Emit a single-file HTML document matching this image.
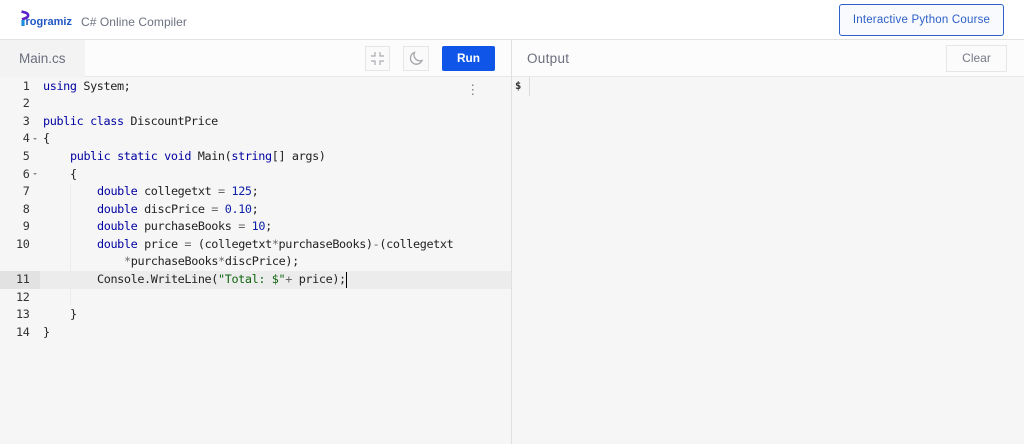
<!DOCTYPE html>
<html><head><meta charset="utf-8">
<style>
html,body{margin:0;padding:0;width:1024px;height:444px;overflow:hidden;background:#f6f6f6}
*{box-sizing:border-box}
.a{position:absolute;white-space:pre}
.ui{font-family:"Liberation Sans",sans-serif}
.code{font-family:"DejaVu Sans Mono",monospace;font-size:11.8px;letter-spacing:-.38px;line-height:17.57px;color:#222;height:17.57px}
.num{left:0;width:29.5px;text-align:right;font-family:"DejaVu Sans Mono",monospace;font-size:11.8px;letter-spacing:-.38px;line-height:17.57px;color:#333}
.k{color:#0000a2}.n{color:#0b1fa8}.s{color:#116611}.o{color:#666}
.f{position:absolute;left:33px;width:0;height:0;border-left:2px solid transparent;border-right:2px solid transparent;border-top:2.5px solid #888}
</style></head>
<body>
<div class="a" style="left:0;top:0;width:1024px;height:40px;background:#fff;border-bottom:1px solid #e2e2e4"></div>
<svg class="a" style="left:20px;top:10px" width="14" height="17" viewBox="0 0 14 17">
<path d="M1.5 1.5 L6.5 3 Q9.5 5 7 7.5 L2 9.5" fill="none" stroke="#5b22c9" stroke-width="2.6"/>
<path d="M3 10 V16" stroke="#1d8fe0" stroke-width="3.2"/>
</svg>
<div class="a ui" style="left:25.5px;top:15px;font-size:11px;font-weight:bold;color:#1f55c4;line-height:14px">rogramiz</div>
<div class="a ui" style="left:81px;top:14px;font-size:12px;color:#6c7180;line-height:16px;letter-spacing:.07px">C# Online Compiler</div>
<div class="a ui" style="left:839px;top:4px;width:165px;height:32px;border:1px solid #2e62c8;border-radius:3px;background:#f8fafe;color:#2b5fc7;font-size:11.5px;line-height:30px;text-align:center;letter-spacing:.2px">Interactive Python Course</div>

<div class="a" style="left:0;top:40px;width:1024px;height:37px;background:#fcfcfc;border-bottom:1px solid #e8e8e8"></div>
<div class="a" style="left:0;top:40px;width:85px;height:37px;background:#f3f3f4"></div>
<div class="a ui" style="left:19px;top:50px;font-size:13.5px;color:#6b6f7c;line-height:17px">Main.cs</div>
<div class="a" style="left:365px;top:46px;width:25px;height:25px;border:1px solid #e6e6e6;background:#fafafa"></div>
<svg class="a" style="left:369px;top:50px" width="17" height="17" viewBox="0 0 17 17" fill="none" stroke="#aaaab0" stroke-width="1.2">
<path d="M2 6H6V2M11 2V6H15M15 11H11V15M6 15V11H2"/>
</svg>
<div class="a" style="left:403px;top:46px;width:26px;height:25px;border:1px solid #e6e6e6;background:#fafafa"></div>
<svg class="a" style="left:408px;top:51px" width="16" height="15" viewBox="0 0 16 15" fill="none" stroke="#a5a5aa" stroke-width="1.3">
<path d="M6.5 1.5A6 6 0 1 0 14 9.5 A6 6 0 0 1 6.5 1.5Z"/>
</svg>
<div class="a ui" style="left:442px;top:46px;width:53px;height:25px;background:#0f55e8;border-radius:2px;color:#fff;font-size:11.8px;font-weight:bold;line-height:25px;text-align:center">Run</div>
<div class="a ui" style="left:527px;top:50px;font-size:13.5px;color:#6b6f7c;line-height:17px;letter-spacing:.3px">Output</div>
<div class="a ui" style="left:946px;top:45px;width:61px;height:27px;border:1px solid #e6e6e6;background:#fbfbfb;color:#777a84;font-size:12px;line-height:25px;text-align:center">Clear</div>

<div class="a" style="left:511px;top:40px;width:1px;height:404px;background:#e0e0e0"></div>
<div class="a" style="left:0;top:271px;width:40px;height:17.5px;background:#e2e2e2"></div>
<div class="a" style="left:40px;top:271px;width:471px;height:17.5px;background:#ececec"></div>
<div class="a" style="left:70px;top:183px;width:1px;height:123px;background:#ececec"></div>
<div class="a" style="left:345.5px;top:272px;width:1.5px;height:16px;background:#000"></div>
<svg class="a" style="left:471px;top:84px" width="4" height="12" viewBox="0 0 4 12"><g fill="#888"><rect x="1" y="0.5" width="1.5" height="1.5"/><rect x="1" y="5" width="1.5" height="1.5"/><rect x="1" y="9.5" width="1.5" height="1.5"/></g></svg>

<div class="a num" style="top:77.7px">1</div>
<div class="a num" style="top:95.3px">2</div>
<div class="a num" style="top:112.8px">3</div>
<div class="a num" style="top:130.4px">4</div>
<div class="a num" style="top:148px">5</div>
<div class="a num" style="top:165.5px">6</div>
<div class="a num" style="top:183.1px">7</div>
<div class="a num" style="top:200.7px">8</div>
<div class="a num" style="top:218.3px">9</div>
<div class="a num" style="top:235.8px">10</div>
<div class="a num" style="top:271px">11</div>
<div class="a num" style="top:288.5px">12</div>
<div class="a num" style="top:306.1px">13</div>
<div class="a num" style="top:323.7px">14</div>
<div class="f" style="top:138px"></div>
<div class="f" style="top:173px"></div>

<div class="a code" style="left:43px;top:77.7px"><span class="k">using</span> System;</div>
<div class="a code" style="left:43px;top:112.8px"><span class="k">public</span> <span class="k">class</span> DiscountPrice</div>
<div class="a code" style="left:43px;top:130.4px">{</div>
<div class="a code" style="left:70px;top:148px"><span class="k">public</span> <span class="k">static</span> <span class="k">void</span> Main(<span class="k">string</span>[] args)</div>
<div class="a code" style="left:70px;top:165.5px">{</div>
<div class="a code" style="left:97px;top:183.1px"><span class="k">double</span> collegetxt <span class="o">=</span> <span class="n">125</span>;</div>
<div class="a code" style="left:97px;top:200.7px"><span class="k">double</span> discPrice <span class="o">=</span> <span class="n">0.10</span>;</div>
<div class="a code" style="left:97px;top:218.3px"><span class="k">double</span> purchaseBooks <span class="o">=</span> <span class="n">10</span>;</div>
<div class="a code" style="left:97px;top:235.8px"><span class="k">double</span> price <span class="o">=</span> (collegetxt<span class="o">*</span>purchaseBooks)<span class="o">-</span>(collegetxt</div>
<div class="a code" style="left:124px;top:253.4px"><span class="o">*</span>purchaseBooks<span class="o">*</span>discPrice);</div>
<div class="a code" style="left:97px;top:271px">Console.WriteLine(<span class="s">"Total: $"</span><span class="o">+</span> price);</div>
<div class="a code" style="left:70px;top:306.1px">}</div>
<div class="a code" style="left:43px;top:323.7px">}</div>

<div class="a code" style="left:515px;top:77.7px;font-weight:bold;font-size:10.5px;letter-spacing:0;color:#333">$</div>
<div class="a" style="left:529px;top:77px;width:1px;height:19px;background:#dcdcdc"></div>
</body></html>
